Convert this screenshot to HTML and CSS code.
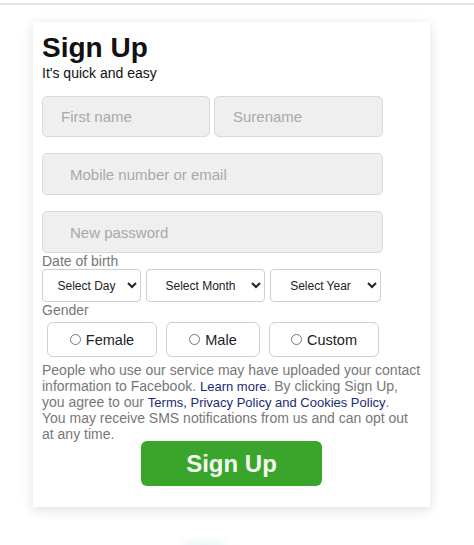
FILE: index.html
```html
<!DOCTYPE html>
<html lang="en">
<head>
<meta charset="utf-8">
<title>Sign Up</title>
<link rel="stylesheet" href="styles.css">
</head>
<body>
<div class="topline"></div>
<div class="card">
  <h1 class="title">Sign Up</h1>
  <div class="subtitle">It's quick and easy</div>
  <div class="name-row">
    <input class="field field-first" type="text" placeholder="First name">
    <input class="field field-last" type="text" placeholder="Surename">
  </div>
  <input class="field field-wide" type="text" placeholder="Mobile number or email">
  <input class="field field-wide" type="password" placeholder="New password">
  <div class="label">Date of birth</div>
  <div class="dob-row">
    <select class="sel sel-day"><option>Select Day</option></select>
    <select class="sel sel-month"><option>Select Month</option></select>
    <select class="sel sel-year"><option>Select Year</option></select>
  </div>
  <div class="label">Gender</div>
  <div class="gender-row">
    <label class="gender gender-female"><input type="radio" name="g"> Female</label>
    <label class="gender gender-male"><input type="radio" name="g"> Male</label>
    <label class="gender gender-custom"><input type="radio" name="g"> Custom</label>
  </div>
  <p class="terms">People who use our service may have uploaded your contact<br>information to Facebook. <a href="#">Learn more</a>. By clicking Sign Up,<br>you agree to our <a href="#">Terms, Privacy Policy and Cookies Policy</a>.<br>You may receive SMS notifications from us and can opt out<br>at any time.</p>
  <button class="submit" type="button">Sign Up</button>
</div>
<div class="glow"></div>
</body>
</html>
```
FILE: styles.css
```css
html, body {
  margin: 0;
  padding: 0;
  background: #ffffff;
  font-family: "Liberation Sans", Arial, sans-serif;
  color: #111;
}

.topline {
  height: 2px;
  margin-top: 3px;
  background: #e3e3e3;
}

.card {
  box-sizing: border-box;
  width: 397px;
  height: 485px;
  margin: 17px 0 0 33px;
  padding: 10px 9px 0 9px;
  background: #fff;
  box-shadow: 0 3px 12px rgba(0, 0, 0, 0.13);
}

.title {
  margin: 0;
  font-size: 28px;
  line-height: 32px;
  font-weight: bold;
  color: #111;
}

.subtitle {
  font-size: 14px;
  line-height: 16px;
  margin-top: 1px;
  color: #111;
}

.field {
  box-sizing: border-box;
  display: block;
  margin: 0;
  border: 1px solid #d9d9d9;
  border-radius: 5px;
  background: #efefef;
  font-family: "Liberation Sans", Arial, sans-serif;
  font-size: 15px;
  color: #333;
  outline: none;
}

.field::placeholder {
  color: #a9a9a9;
}

.name-row {
  display: flex;
  gap: 4px;
  margin-top: 15px;
}

.field-first {
  width: 168px;
  height: 41px;
  padding-left: 18px;
}

.field-last {
  width: 169px;
  height: 41px;
  padding-left: 18px;
}

.field-wide {
  width: 341px;
  height: 42px;
  padding-left: 27px;
  margin-top: 16px;
}

.label {
  font-size: 14px;
  line-height: 16px;
  color: #777;
}

.dob-row {
  display: flex;
  gap: 5px;
}

.sel {
  box-sizing: border-box;
  height: 33px;
  margin: 0;
  border: 1px solid #cfcfcf;
  border-radius: 4px;
  background: #fff;
  font-family: "Liberation Sans", Arial, sans-serif;
  font-size: 12px;
  color: #222;
  text-align-last: center;
  padding: 0 4px 0 6px;
}

.sel-day { width: 99px; }
.sel-month { width: 119px; }
.sel-year { width: 111px; }

.gender-row {
  display: flex;
  gap: 9px;
  margin: 4px 0 0 5px;
}

.gender {
  box-sizing: border-box;
  height: 35px;
  display: flex;
  align-items: center;
  justify-content: center;
  border: 1px solid #cfcfcf;
  border-radius: 6px;
  font-size: 14.5px;
  color: #222;
}

.gender input {
  width: 11px;
  height: 11px;
  margin: 0 5px 0 0;
}

.gender-female { width: 110px; }
.gender-male { width: 94px; }
.gender-custom { width: 110px; }

.terms {
  margin: 5px 0 0 0;
  font-size: 14px;
  line-height: 16px;
  color: #777;
  white-space: nowrap;
}

.terms a {
  color: #1d2a72;
  font-size: 13px;
  line-height: 1;
  text-decoration: none;
}

.submit {
  display: block;
  width: 181px;
  height: 45px;
  margin: -1px auto 0 auto;
  padding: 0;
  border: none;
  border-radius: 6px;
  background: #3aa52b;
  color: #f4fbf2;
  font-family: "Liberation Sans", Arial, sans-serif;
  font-size: 24px;
  font-weight: bold;
}

.glow {
  width: 45px;
  height: 10px;
  margin: 33px 0 0 182px;
  border-radius: 50%;
  background: #eaf8fa;
  filter: blur(3px);
}
```
